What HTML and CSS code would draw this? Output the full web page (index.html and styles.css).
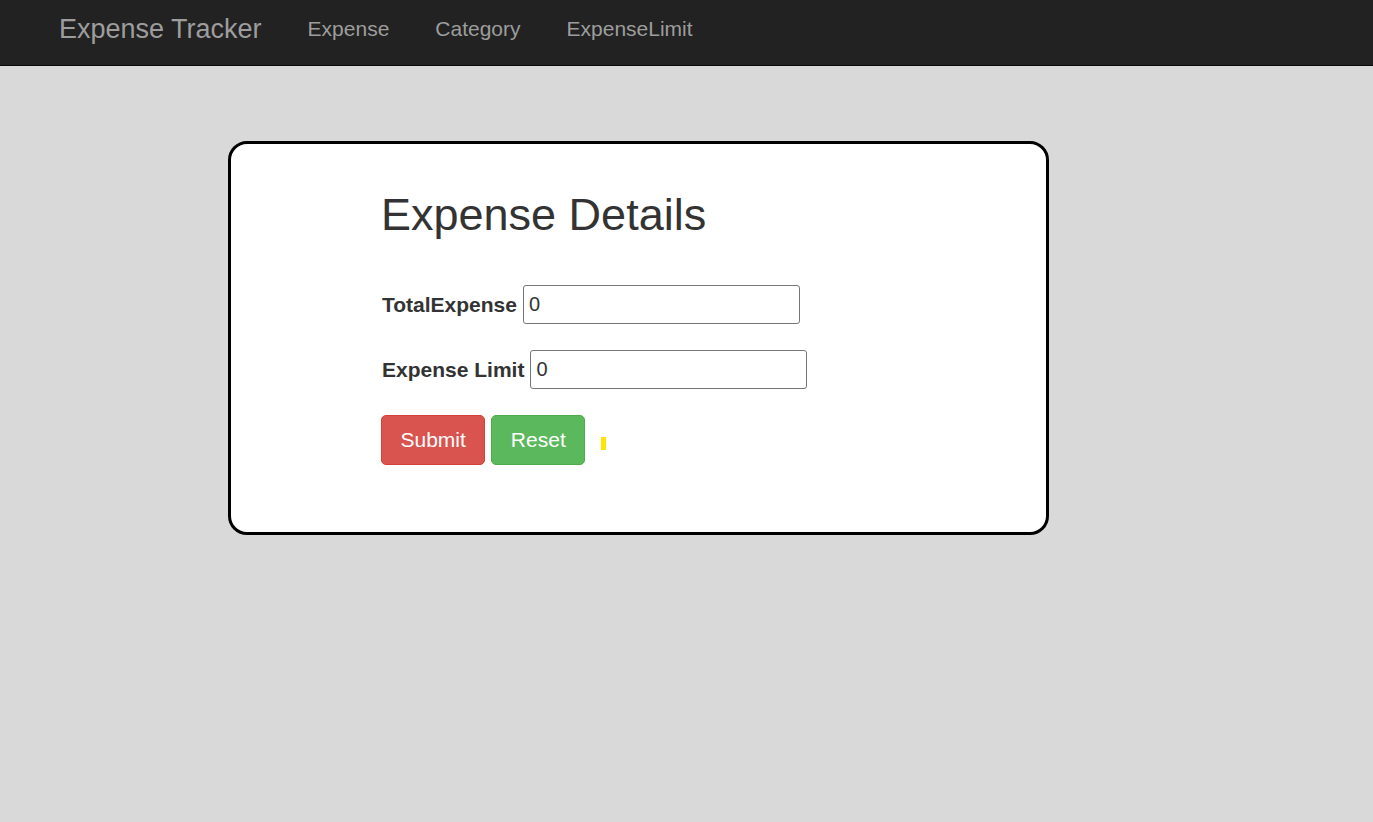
FILE: index.html
```html
<!DOCTYPE html>
<html lang="en">
<head>
    <meta charset="UTF-8">
    <meta name="viewport" content="width=device-width, initial-scale=1.0">
    <title>Expense Tracker</title>
    <link rel="stylesheet" href="styles.css">
</head>
<body>
    <nav class="navbar">
        <a class="brand" href="#">Expense Tracker</a>
        <a class="nav-link" href="#">Expense</a>
        <a class="nav-link" href="#">Category</a>
        <a class="nav-link" href="#">ExpenseLimit</a>
    </nav>

    <div class="page">
        <div class="card">
            <h1 class="card-title">Expense Details</h1>
            <form class="expense-form" onsubmit="return false;">
                <div class="form-row">
                    <label for="total-expense">TotalExpense</label>
                    <input type="text" id="total-expense" value="0">
                </div>
                <div class="form-row">
                    <label for="expense-limit">Expense Limit</label>
                    <input type="text" id="expense-limit" value="0">
                </div>
                <div class="form-actions">
                    <button type="submit" class="btn btn-danger">Submit</button>
                    <button type="reset" class="btn btn-success">Reset</button>
                    <span class="status-mark"></span>
                </div>
            </form>
        </div>
    </div>
</body>
</html>
```

FILE: styles.css
```css
* {
    margin: 0;
    padding: 0;
    box-sizing: border-box;
}
body {
    font-family: "Liberation Sans", Arial, sans-serif;
    background-color: #d9d9d9;
    color: #333;
    min-height: 100vh;
}
.navbar {
    display: flex;
    align-items: center;
    height: 66px;
    padding: 0 0 8px 36px;
    background-color: #222;
    border-bottom: 1px solid #080808;
}
.navbar a {
    color: #9d9d9d;
    text-decoration: none;
    padding: 0 23px;
    line-height: 30px;
}
.brand {
    font-size: 27px;
}
.nav-link {
    font-size: 21px;
}

.page {
    padding: 75px 0 0 228px;
}
.card {
    width: 821px;
    height: 394px;
    background-color: #fff;
    border: 3px solid #000;
    border-radius: 19px;
    padding: 46px 0 0 150px;
}
.card-title {
    font-size: 45px;
    font-weight: normal;
    line-height: 50px;
}
.expense-form {
    margin-top: 45px;
    display: flex;
    flex-direction: column;
    gap: 26px;
}
.form-row {
    display: flex;
    align-items: center;
    gap: 6px;
}
.form-row label {
    font-size: 21px;
    font-weight: bold;
    padding-left: 1px;
}
.form-row input {
    width: 277px;
    height: 39px;
    border: 1px solid #767676;
    border-radius: 3px;
    padding: 0 5px;
    font-family: inherit;
    font-size: 20px;
    color: #333;
}
.form-actions {
    display: flex;
    align-items: center;
    gap: 6px;
}
.btn {
    height: 50px;
    padding: 0 18.5px;
    font-family: inherit;
    font-size: 21px;
    color: #fff;
    border: 1px solid transparent;
    border-radius: 5px;
    cursor: pointer;
}
.btn-danger {
    background-color: #d9534f;
    border-color: #d43f3a;
}
.btn-success {
    background-color: #5cb85c;
    border-color: #4cae4c;
}
.status-mark {
    width: 5px;
    height: 13px;
    margin: 6px 0 0 10px;
    background-color: #ffe500;
}
```
